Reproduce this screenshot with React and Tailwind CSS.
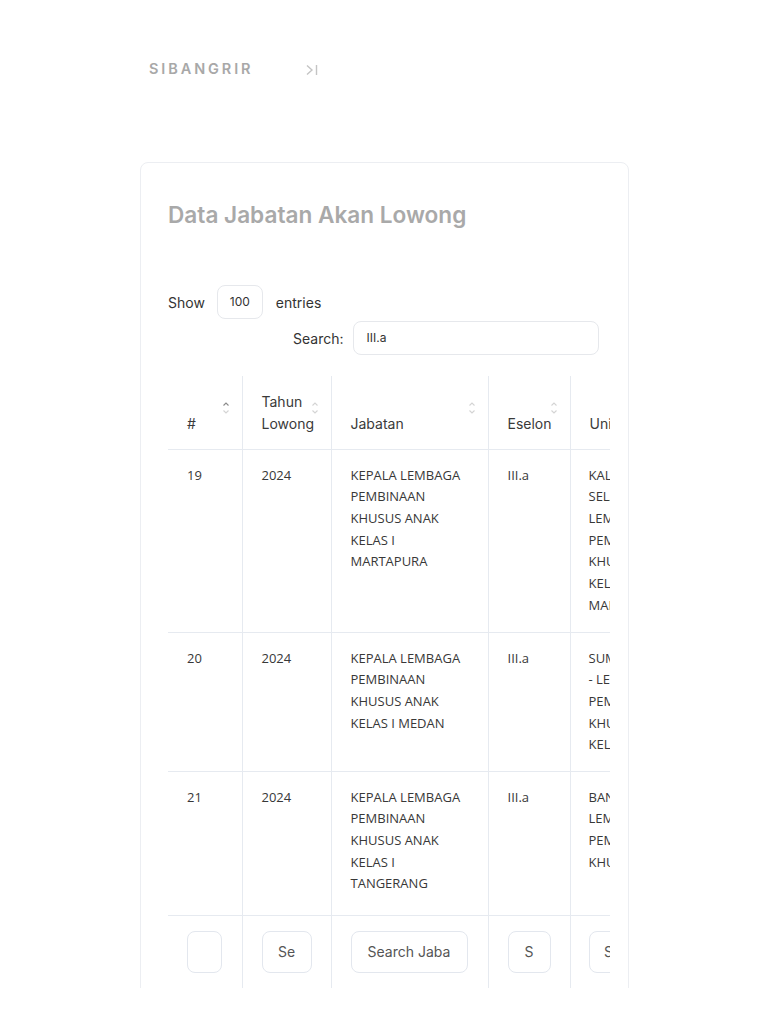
import React from "react";

const P = { fontFamily: "Inter, 'Open Sans', sans-serif" };
const O = { fontFamily: "'Open Sans', 'Noto Sans', sans-serif" };

function SortIcon({ active }) {
  return (
    <svg width="8" height="16" viewBox="0 0 8 16" className="absolute right-[12px] top-[24px]">
      <path d="M1.5 5.5 L4 3 L6.5 5.5" fill="none" stroke={active ? "#8a8a8a" : "#d4d4d4"} strokeWidth="1.1" />
      <path d="M1.5 10.5 L4 13 L6.5 10.5" fill="none" stroke="#d4d4d4" strokeWidth="1.1" />
    </svg>
  );
}

const rows = [
  {
    no: "19",
    h: "h-[183px]",
    jab: ["KEPALA LEMBAGA", "PEMBINAAN", "KHUSUS ANAK", "KELAS I", "MARTAPURA"],
    unit: ["KALIMANTAN", "SELATAN -", "LEMBAGA", "PEMBINAAN", "KHUSUS ANAK", "KELAS I", "MARTAPURA"],
  },
  {
    no: "20",
    h: "h-[139px]",
    jab: ["KEPALA LEMBAGA", "PEMBINAAN", "KHUSUS ANAK", "KELAS I MEDAN"],
    unit: ["SUMATERA UTARA", "- LEMBAGA", "PEMBINAAN", "KHUSUS ANAK", "KELAS I MEDAN"],
  },
  {
    no: "21",
    h: "h-[144px]",
    jab: ["KEPALA LEMBAGA", "PEMBINAAN", "KHUSUS ANAK", "KELAS I", "TANGERANG"],
    unit: ["BANTEN -", "LEMBAGA", "PEMBINAAN", "KHUSUS ANAK"],
  },
];

export default function App() {
  return (
    <div className="w-[768px] h-[1024px] bg-white overflow-hidden">
      <div className="h-[988px] overflow-hidden">
        <div className="flex items-center h-[30px] mt-[54px] pl-[149px]">
          <span className="text-[14.5px] font-semibold tracking-[2.9px] text-[#a8a8a8]" style={P}>
            SIBANGRIR
          </span>
          <svg width="14" height="12" viewBox="0 0 14 12" className="ml-[52px] mt-[2px]">
            <path d="M2 1.5 L7 6 L2 10.5" fill="none" stroke="#c4c4c4" strokeWidth="1.4" />
            <path d="M11.5 1 L11.5 11" stroke="#c4c4c4" strokeWidth="1.4" />
          </svg>
        </div>

        <div className="ml-[140px] mt-[78px] w-[489px] h-[900px] border border-[#eceef2] rounded-[8px] pl-[27px]">
          <h1 className="mt-[36px] text-[22.6px] leading-[32px] font-semibold text-[#a9a9a9]" style={P}>
            Data Jabatan Akan Lowong
          </h1>

          <div className="mt-[54px] flex items-center text-[14px] text-[#333]" style={P}>
            <span>Show</span>
            <div className="ml-[12px] w-[46px] h-[34px] border border-[#e6e8ec] rounded-[8px] flex items-center justify-center text-[12px]">
              100
            </div>
            <span className="ml-[13px]">entries</span>
          </div>

          <div className="mt-[2px] flex items-center text-[14px] text-[#333]" style={P}>
            <span className="ml-[125px]">Search:</span>
            <div className="ml-[9px] w-[246px] h-[34px] border border-[#e6e8ec] rounded-[8px] flex items-center pl-[13px] text-[12px]">
              III.a
            </div>
          </div>

          <div className="mt-[21px] w-[442px] overflow-hidden">
            <table className="table-fixed border-collapse w-[662px]">
              <colgroup>
                <col className="w-[74px]" />
                <col className="w-[89px]" />
                <col className="w-[157px]" />
                <col className="w-[82px]" />
                <col className="w-[260px]" />
              </colgroup>
              <thead>
                <tr className="h-[73px] border-b border-[#e6eaf0]">
                  {[
                    ["#", true],
                    ["Tahun Lowong", false],
                    ["Jabatan", false],
                    ["Eselon", false],
                    ["Unit Kerja", false],
                  ].map(([t, a], i) => (
                    <th
                      key={i}
                      className={`relative align-bottom text-left font-normal text-[14px] leading-[22px] text-[#3a3a3a] pb-[14px] ${
                        i === 0 ? "pl-[19px]" : "pl-[19px] border-l border-[#e6eaf0]"
                      }`}
                      style={P}
                    >
                      {i === 1 ? (
                        <span>
                          Tahun
                          <br />
                          Lowong
                        </span>
                      ) : (
                        t
                      )}
                      {i < 4 && <SortIcon active={a} />}
                    </th>
                  ))}
                </tr>
              </thead>
              <tbody>
                {rows.map((r) => (
                  <tr key={r.no} className={`${r.h} border-b border-[#e6eaf0] align-top text-[13px] leading-[21.7px] text-[#383838]`} style={O}>
                    <td className="pl-[19px] pt-[15px]">{r.no}</td>
                    <td className="pl-[19px] pt-[15px] border-l border-[#e6eaf0]">2024</td>
                    <td className="pl-[19px] pt-[15px] border-l border-[#e6eaf0]">
                      {r.jab.map((l, i) => (
                        <div key={i} className="whitespace-nowrap">{l}</div>
                      ))}
                    </td>
                    <td className="pl-[19px] pt-[15px] border-l border-[#e6eaf0]">III.a</td>
                    <td className="pl-[18px] pt-[15px] border-l border-[#e6eaf0]">
                      {r.unit.map((l, i) => (
                        <div key={i} className="whitespace-nowrap">{l}</div>
                      ))}
                    </td>
                  </tr>
                ))}
                <tr className="h-[73px] align-top">
                  {[
                    ["", "w-[35px]"],
                    ["Se", "w-[50px]"],
                    ["Search Jaba", "w-[117px]"],
                    ["S", "w-[43px]"],
                    ["Search Unit Kerja", "w-[200px]"],
                  ].map(([t, w], i) => (
                    <td
                      key={i}
                      className={`pt-[15px] ${i === 0 ? "pl-[19px]" : i === 4 ? "pl-[18px] border-l border-[#e6eaf0]" : "pl-[19px] border-l border-[#e6eaf0]"}`}
                    >
                      <div
                        className={`${w} h-[42px] border border-[#e3e7ee] rounded-[8px] flex items-center justify-center overflow-hidden whitespace-nowrap text-[14px] text-[#555]`}
                        style={P}
                      >
                        {i === 4 ? <span className="ml-[-160px]">S</span> : t}
                      </div>
                    </td>
                  ))}
                </tr>
              </tbody>
            </table>
          </div>
        </div>
      </div>
    </div>
  );
}
